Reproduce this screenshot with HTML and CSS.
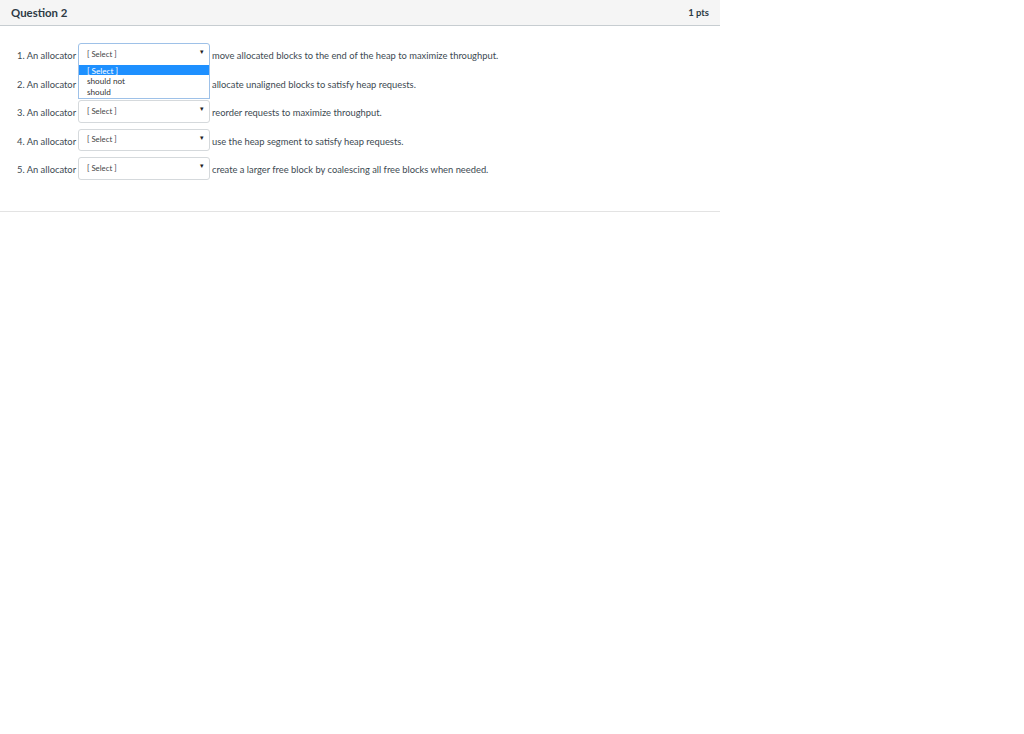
FILE: index.html
```html
<!DOCTYPE html>
<html lang="en">
<head>
  <meta charset="UTF-8">
  <title>Question 2</title>
  <link rel="stylesheet" href="styles.css">
</head>
<body>

<div class="question">
  <div class="question-header">
    <span class="question-title">Question 2</span>
    <span class="question-points">1 pts</span>
  </div>

  <div class="question-body">
    <div class="row">
      <span class="label">1. An allocator</span>
      <div class="dropdown open">
        <span class="dropdown-value">[ Select ]</span>
        <span class="arrow">&#9662;</span>
        <ul class="dropdown-menu">
          <li class="active">[ Select ]</li>
          <li>should not</li>
          <li>should</li>
        </ul>
      </div>
      <span class="rest">move allocated blocks to the end of the heap to maximize throughput.</span>
    </div>

    <!-- this row's box sits under the open menu above -->
    <div class="row covered">
      <span class="label">2. An allocator</span>
      <div class="dropdown">
        <span class="dropdown-value">[ Select ]</span>
        <span class="arrow">&#9662;</span>
      </div>
      <span class="rest">allocate unaligned blocks to satisfy heap requests.</span>
    </div>

    <div class="row">
      <span class="label">3. An allocator</span>
      <div class="dropdown">
        <span class="dropdown-value">[ Select ]</span>
        <span class="arrow">&#9662;</span>
      </div>
      <span class="rest">reorder requests to maximize throughput.</span>
    </div>

    <div class="row">
      <span class="label">4. An allocator</span>
      <div class="dropdown">
        <span class="dropdown-value">[ Select ]</span>
        <span class="arrow">&#9662;</span>
      </div>
      <span class="rest">use the heap segment to satisfy heap requests.</span>
    </div>

    <div class="row">
      <span class="label">5. An allocator</span>
      <div class="dropdown">
        <span class="dropdown-value">[ Select ]</span>
        <span class="arrow">&#9662;</span>
      </div>
      <span class="rest">create a larger free block by coalescing all free blocks when needed.</span>
    </div>
  </div>
</div>

</body>
</html>
```

FILE: styles.css
```css
body {
  font-family: Lato, "Open Sans", sans-serif;
  color: #2d3b45;
  background: #fff;
  margin: 0;
  padding: 0;
}

.question {
  width: 720px;
  border-bottom: 1px solid #e3e3e3;
}

.question-header {
  display: flex;
  justify-content: space-between;
  align-items: center;
  height: 25px;
  padding: 0 11px;
  background: #f5f5f5;
  border-bottom: 1px solid #c7cdd1;
}

.question-title {
  font-size: 11.4px;
  font-weight: bold;
}

.question-points {
  font-size: 9.5px;
  font-weight: bold;
}

.question-body {
  display: flex;
  flex-direction: column;
  gap: 6px;
  padding: 17px 0 31px 17px;
}

.row {
  display: flex;
  align-items: center;
  height: 22.5px;
  font-size: 9.35px;
  color: #3d4a52;
}

.label {
  width: 61px;
  padding-top: 3px;
}

.rest {
  white-space: nowrap;
  padding-top: 3px;
}

.dropdown {
  position: relative;
  box-sizing: border-box;
  width: 132px;
  height: 100%;
  display: flex;
  align-items: center;
  justify-content: space-between;
  padding: 0 5px 0 8px;
  border: 1px solid #d5d9dc;
  border-radius: 3px;
  margin-right: 2px;
}

.dropdown.open {
  border-color: #9ec1e8;
  border-bottom-left-radius: 0;
  border-bottom-right-radius: 0;
}

.covered .dropdown-value,
.covered .arrow {
  visibility: hidden;
}

.dropdown-value {
  font-size: 7.8px;
  color: #444;
  margin-top: -1px;
}

.arrow {
  font-size: 7px;
  color: #222;
  margin-top: -5px;
}

.dropdown-menu {
  position: absolute;
  top: 100%;
  left: -1px;
  right: -1px;
  margin: 0;
  padding: 0 0 1px;
  list-style: none;
  background: #fff;
  border: 1px solid #9ec1e8;
  border-top: none;
  z-index: 2;
}

.dropdown-menu li {
  height: 10.7px;
  line-height: 12px;
  padding-left: 8px;
  font-size: 8.2px;
  color: #333;
}

.dropdown-menu li.active {
  background: #1e90ff;
  color: #fff;
}
```
